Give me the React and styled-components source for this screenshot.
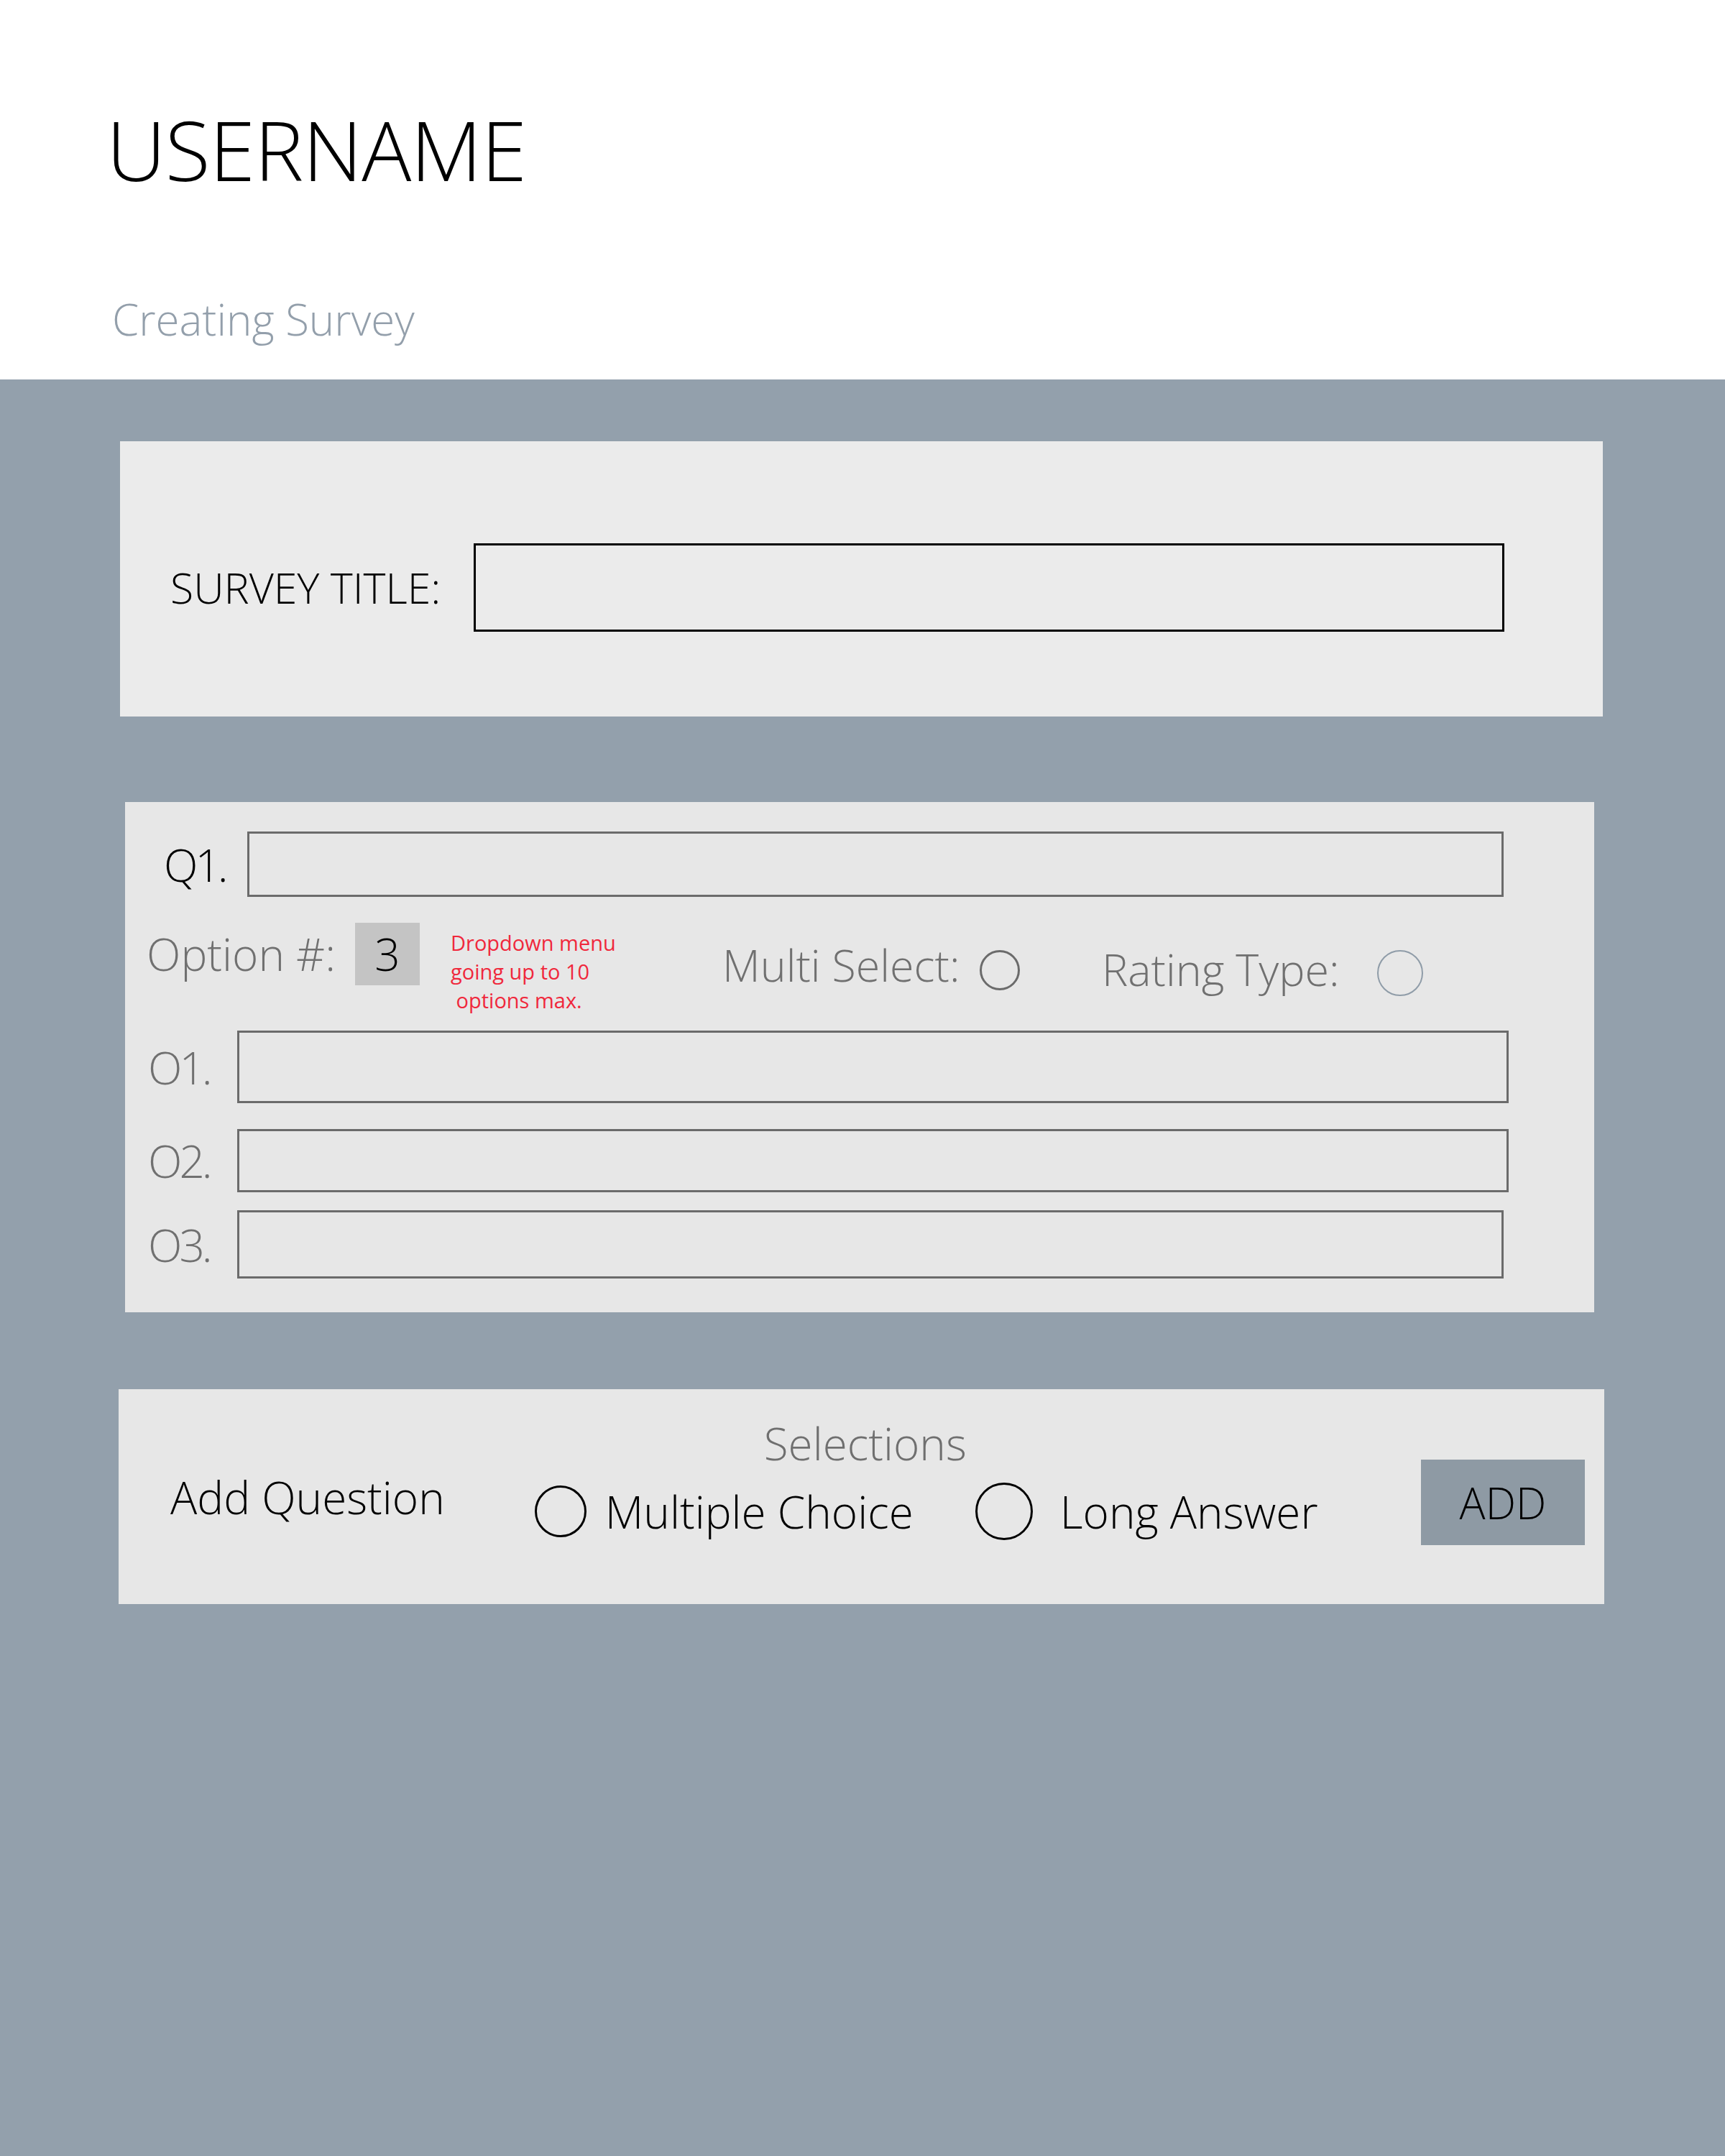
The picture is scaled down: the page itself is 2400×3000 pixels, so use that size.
import React from 'react';
import styled, { createGlobalStyle } from 'styled-components';

const GlobalStyle = createGlobalStyle`
    html, body {
        margin: 0;
        padding: 0;
        background: #93a0ac;
    }
    body {
        font-family: "Open Sans", "Noto Sans", sans-serif;
        font-weight: 300;
    }
`;

const Page = styled.div`
    width: 2400px;
    min-height: 3000px;
    background: #93a0ac;
`;

const Header = styled.header`
    height: 528px;
    box-sizing: border-box;
    background: #ffffff;
    padding: 150px 0 0 148px;
`;

const Username = styled.h1`
    margin: 0;
    font-size: 115px;
    font-weight: 300;
    line-height: 1;
    letter-spacing: -1px;
    color: #000000;
`;

const Subtitle = styled.div`
    margin: 149px 0 0 8px;
    font-size: 60px;
    line-height: 1;
    color: #939fab;
`;

const Main = styled.main`
    padding-top: 86px;
    display: flex;
    flex-direction: column;
`;

const Panel = styled.section`
    box-sizing: border-box;
    margin: ${p => p.$top}px 0 0 ${p => p.$left}px;
    width: ${p => p.$width}px;
    height: ${p => p.$height}px;
    background: ${p => p.$bg || '#e7e7e7'};
`;

const TitlePanel = styled(Panel)`
    display: flex;
    align-items: center;
    padding-left: 70px;
    padding-top: 24px;
`;

const Label = styled.span`
    font-size: ${p => p.$size || 60}px;
    line-height: 1;
    color: ${p => p.$color || '#000000'};
    letter-spacing: ${p => p.$tight ? '-4px' : 'normal'};
    white-space: pre;
`;

const Field = styled.div`
    box-sizing: border-box;
    width: ${p => p.$width}px;
    height: ${p => p.$height}px;
    border: ${p => p.$border || '3px solid #6b6b6b'};
    background: transparent;
`;

const QuestionPanel = styled(Panel)`
    display: flex;
    flex-direction: column;
    padding-top: 41px;
`;

const Row = styled.div`
    display: flex;
    align-items: center;
    margin-top: ${p => p.$top || 0}px;
    padding-left: ${p => p.$indent || 0}px;
`;

const LabelCell = styled.div`
    width: ${p => p.$width}px;
    flex-shrink: 0;
    margin-left: ${p => p.$gap || 0}px;
    transform: translateY(${p => p.$shift || 0}px);
`;

const CountBox = styled.div`
    width: 90px;
    height: 87px;
    background: #c4c4c4;
    display: flex;
    align-items: center;
    justify-content: center;
    font-size: 62px;
    color: #000000;
`;

const Note = styled.div`
    margin-left: 43px;
    width: 378px;
    font-size: 29px;
    line-height: 40px;
    color: #f0283c;
    white-space: pre;
    font-weight: 400;
    transform: translateY(25px);
`;

const Radio = styled.span`
    display: inline-block;
    box-sizing: border-box;
    flex-shrink: 0;
    width: ${p => p.$size}px;
    height: ${p => p.$size}px;
    border-radius: 50%;
    border: ${p => p.$stroke || 3}px solid ${p => p.$color || '#000000'};
    margin-left: ${p => p.$gap || 0}px;
    transform: translateY(${p => p.$shift || 0}px);
`;

const AddPanel = styled(Panel)`
    display: flex;
    align-items: center;
    padding-left: 72px;
`;

const Selections = styled.div`
    display: flex;
    flex-direction: column;
    margin-left: 125px;
    width: 1020px;
`;

const SelectionsTitle = styled.div`
    font-size: 62px;
    line-height: 1;
    color: #6f6f6f;
    text-align: center;
    padding-right: 100px;
    margin-top: -46px;
`;

const Choices = styled.div`
    display: flex;
    align-items: center;
    margin-top: 24px;
`;

const ChoiceText = styled(Label)`
    margin-left: ${p => p.$gap}px;
`;

const AddButton = styled.button`
    margin-left: auto;
    margin-right: 27px;
    width: 228px;
    height: 119px;
    border: none;
    background: #8e9aa4;
    font-family: inherit;
    font-weight: 300;
    font-size: 60px;
    color: #000000;
    transform: translateY(8px);
`;

const options = [
    { id: 'O1.', top: 47, height: 101, width: 1769 },
    { id: 'O2.', top: 36, height: 88, width: 1769 },
    { id: 'O3.', top: 25, height: 95, width: 1762 },
];

function App() {
    return (
        <Page>
            <GlobalStyle />

            <Header>
                <Username>USERNAME</Username>
                <Subtitle>Creating Survey</Subtitle>
            </Header>

            <Main>
                <TitlePanel $top={0} $left={167} $width={2063} $height={383} $bg="#ebebeb">
                    <LabelCell $width={422}>
                        <Label $size={59}>SURVEY TITLE:</Label>
                    </LabelCell>
                    <Field $width={1434} $height={123} $border="3px solid #000000" />
                </TitlePanel>

                <QuestionPanel $top={119} $left={174} $width={2044} $height={710}>
                    <Row $indent={54}>
                        <LabelCell $width={116}>
                            <Label $size={62} $tight>Q1.</Label>
                        </LabelCell>
                        <Field $width={1748} $height={91} />
                    </Row>

                    <Row $top={19} $indent={30}>
                        <LabelCell $width={290}>
                            <Label $size={62} $color="#707070">Option #:</Label>
                        </LabelCell>
                        <CountBox>3</CountBox>
                        <Note>{'Dropdown menu\ngoing up to 10\n options max.'}</Note>
                        <LabelCell $width={358} $shift={15}>
                            <Label $size={61} $color="#707070">Multi Select:</Label>
                        </LabelCell>
                        <Radio $size={56} $color="#6b6b6b" $shift={23} />
                        <LabelCell $width={383} $gap={114} $shift={21}>
                            <Label $size={61} $color="#707070">Rating Type:</Label>
                        </LabelCell>
                        <Radio $size={64} $stroke={2} $color="#8f9ca8" $shift={27} />
                    </Row>

                    {options.map(o => (
                        <Row key={o.id} $top={o.top} $indent={32}>
                            <LabelCell $width={124}>
                                <Label $size={62} $color="#707070" $tight>{o.id}</Label>
                            </LabelCell>
                            <Field $width={o.width} $height={o.height} />
                        </Row>
                    ))}
                </QuestionPanel>

                <AddPanel $top={107} $left={165} $width={2067} $height={299}>
                    <Label $size={62}>Add Question</Label>
                    <Selections>
                        <SelectionsTitle>Selections</SelectionsTitle>
                        <Choices>
                            <Radio $size={72} />
                            <ChoiceText $size={62} $gap={26}>Multiple Choice</ChoiceText>
                            <Radio $size={80} $gap={86} />
                            <ChoiceText $size={62} $gap={38}>Long Answer</ChoiceText>
                        </Choices>
                    </Selections>
                    <AddButton>ADD</AddButton>
                </AddPanel>
            </Main>
        </Page>
    );
}

export default App;
